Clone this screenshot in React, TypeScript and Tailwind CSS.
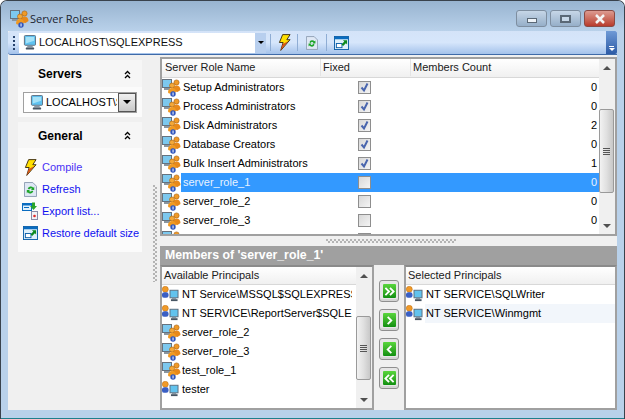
import React from "react";

const font = "font-['Liberation_Sans',Arial,sans-serif]";

function Monitor({ className = "" }: { className?: string }) {
  return (
    <svg viewBox="0 0 14 16" className={className}>
      <rect x="1.500" y="0.500" width="12" height="10.500" rx="1" fill="#5fc2f0" stroke="#5a6b7c" />
      <path d="M3 2h9v4L3 9z" fill="#a5e2f8" />
      <path d="M5 11.500h5l1 2H4z" fill="#8796a3" />
      <rect x="3" y="13.500" width="9" height="2" rx="0.500" fill="#475563" />
    </svg>
  );
}

function RoleIcon() {
  return (
    <svg viewBox="0 0 19 18" className="w-[19px] h-[18px] shrink-0">
      <rect x="0.500" y="0.500" width="9" height="8" fill="#7cc8ee" stroke="#66727e" />
      <rect x="2" y="9" width="6" height="2" fill="#8a96a0" />
      <circle cx="14.500" cy="3.500" r="2.600" fill="#f09a28" stroke="#a8620f" strokeWidth="0.600" />
      <path d="M10.500 12c0-3.500 1.500-5.500 4-5.500s4 2 4 4.500l-3 2z" fill="#e8891a" />
      <circle cx="10" cy="6.500" r="2.500" fill="#f4a838" stroke="#a8620f" strokeWidth="0.600" />
      <path d="M6 13.500c0-3 1.500-4.500 4-4.500s4 1.500 4 4l-2 1.500H7z" fill="#f09a22" />
      <circle cx="11" cy="15" r="2.700" fill="#2f55bd" />
      <rect x="10.500" y="13.500" width="1.100" height="3" fill="#e8eefc" />
    </svg>
  );
}

function UserIcon() {
  return (
    <svg viewBox="0 0 19 18" className="-ml-[1px] w-[18px] h-[17px] shrink-0">
      <circle cx="4.500" cy="3.500" r="3.200" fill="#f09a28" stroke="#b86a10" strokeWidth="0.500" />
      <rect x="1" y="6.500" width="7" height="6" rx="2.500" fill="#3a5fc4" />
      <rect x="9.500" y="4.500" width="8.500" height="8" fill="#62c3ee" stroke="#5a6b7c" />
      <rect x="11.500" y="12.500" width="4.500" height="1.500" fill="#8796a3" />
      <rect x="10.500" y="14" width="7" height="2" fill="#475563" />
    </svg>
  );
}

function Bolt({ className = "" }: { className?: string }) {
  return (
    <svg viewBox="0 0 14 18" className={className}>
      <path d="M5 0.500h8L9.500 6H13L3 17.500 5.500 9H1.500z" fill="#ffe000" stroke="#3a2a10" strokeWidth="1" />
      <path d="M11 7.500 4.500 15.500 3 17.500 5 11z" fill="#d9501e" />
    </svg>
  );
}

function RefreshDoc({ className = "" }: { className?: string }) {
  return (
    <svg viewBox="0 0 14 16" className={className}>
      <path d="M0.500 0.500h9l4 4v11H0.500z" fill="#dfe8f5" stroke="#8a9ab0" />
      <path d="M4 7a3.500 3.500 0 0 1 6-1l1-1v3.500H7.500l1.200-1.200A2 2 0 0 0 5.500 8z" fill="#1fa52a" />
      <path d="M10 10a3.500 3.500 0 0 1-6 1l-1 1V8.500h3.500L5.300 9.700A2 2 0 0 0 8.500 9z" fill="#1fa52a" />
    </svg>
  );
}

function RestoreIcon({ className = "" }: { className?: string }) {
  return (
    <svg viewBox="0 0 16 15" className={className}>
      <rect x="0.500" y="0.500" width="15" height="14" fill="#dff0fb" stroke="#0a5ea8" />
      <rect x="1" y="1" width="14" height="2.500" fill="#0a6cc0" />
      <rect x="2.500" y="8" width="6" height="4.500" fill="#fff" stroke="#0a5ea8" />
      <path d="M8 9l3-3-1.500-1.500H14V9l-1.300-1.300-3 3z" fill="#0d8a1e" />
    </svg>
  );
}

function ExportIcon() {
  return (
    <svg viewBox="0 0 16 18" className="w-[16px] h-[18px]">
      <rect x="0.500" y="1.500" width="9" height="7" fill="#dff0fb" stroke="#0a6cc0" />
      <rect x="1" y="2" width="8" height="1.500" fill="#0a6cc0" />
      <rect x="2" y="5" width="5" height="1" fill="#0a6cc0" />
      <path d="M10 0.500h3v3.500h2l-3.500 4-3.500-4h2z" fill="#2aa52a" />
      <rect x="9.500" y="9.500" width="6" height="8" fill="#f2f2f6" stroke="#8a8aa8" />
      <circle cx="12.500" cy="14" r="1.300" fill="#e02828" />
    </svg>
  );
}

function Collapse() {
  return (
    <svg viewBox="0 0 7 9" className="ml-auto mr-[11px] w-[7px] h-[9px]">
      <path d="M1 4l2.500-2.500L6 4M1 8l2.500-2.500L6 8" fill="none" stroke="#000" strokeWidth="1.300" />
    </svg>
  );
}

function ArrowBtn({ path }: { path: string }) {
  return (
    <button className="w-[20px] h-[22px] flex items-center justify-center rounded-[3px] border border-[#8f8f8f] bg-[#e6e6e6] shadow-[inset_0_-2px_0_#d4d4d4]">
      <span className="w-[13px] h-[14px] flex items-center justify-center rounded-[1px] bg-gradient-to-b from-[#58d63c] to-[#0e8f10]">
        <svg viewBox="0 0 12 12" className="w-[11px] h-[11px]">
          <path d={path} fill="none" stroke="#fff" strokeWidth="2" />
        </svg>
      </span>
    </button>
  );
}

function Scrollbar({ thumb, before }: { thumb: string; before: string }) {
  return (
    <div className="w-[16px] shrink-0 flex flex-col bg-[#f0f0f0]">
      <div className="h-[17px] shrink-0 flex items-center justify-center">
        <span className="w-0 h-0 border-x-[4px] border-x-transparent border-b-[4px] border-b-[#505050]" />
      </div>
      <div className={before} />
      <div className={`${thumb} w-[15px] flex flex-col items-center justify-center gap-[1px] rounded-[2px] border border-[#9a9a9a] bg-gradient-to-r from-[#f2f2f2] via-[#e0e0e0] to-[#c8c8c8]`}>
        <span className="w-[7px] h-px bg-[#555]" />
        <span className="w-[7px] h-px bg-[#555]" />
        <span className="w-[7px] h-px bg-[#555]" />
        <span className="w-[7px] h-px bg-[#555]" />
      </div>
      <div className="flex-1" />
      <div className="h-[17px] shrink-0 flex items-center justify-center">
        <span className="w-0 h-0 border-x-[4px] border-x-transparent border-t-[4px] border-t-[#505050]" />
      </div>
    </div>
  );
}

function Check({ checked }: { checked: boolean }) {
  return (
    <span className="w-[13px] h-[13px] flex items-center justify-center border border-[#8e8e8e] bg-gradient-to-br from-[#d8d8d8] to-[#f4f4f4]">
      {checked && (
        <svg viewBox="0 0 11 11" className="w-[11px] h-[11px]">
          <path d="M2.500 5.500 5 8.500 8.500 1.500" fill="none" stroke="#4a66ae" strokeWidth="2" />
        </svg>
      )}
    </span>
  );
}

const roles = [
  { name: "Setup Administrators", fixed: true, count: 0 },
  { name: "Process Administrators", fixed: true, count: 0 },
  { name: "Disk Administrators", fixed: true, count: 2 },
  { name: "Database Creators", fixed: true, count: 0 },
  { name: "Bulk Insert Administrators", fixed: true, count: 1 },
  { name: "server_role_1", fixed: false, count: 0, selected: true },
  { name: "server_role_2", fixed: false, count: 0 },
  { name: "server_role_3", fixed: false, count: 0 },
  { name: "", fixed: false, count: null },
];

const available = [
  { name: "NT Service\\MSSQL$SQLEXPRESS", user: true },
  { name: "NT SERVICE\\ReportServer$SQLEXPRESS", user: true },
  { name: "server_role_2", user: false },
  { name: "server_role_3", user: false },
  { name: "test_role_1", user: false },
  { name: "tester", user: true },
];

const links = [
  { label: "Compile", color: "text-[#4a32f5]", icon: <Bolt className="w-[13px] h-[17px]" /> },
  { label: "Refresh", color: "text-[#1010f0]", icon: <RefreshDoc className="w-[13px] h-[15px]" /> },
  { label: "Export list...", color: "text-[#1010f0]", icon: <ExportIcon /> },
  { label: "Restore default size", color: "text-[#1010f0]", icon: <RestoreIcon className="w-[15px] h-[14px]" /> },
];

export default function App() {
  return (
    <div className={`${font} w-[625px] h-[419px] flex flex-col overflow-hidden rounded-t-[7px] border-t border-x border-[#39424c] bg-[#b9d1ea] text-[11px] text-black`}>
      {/* title bar */}
      <div className="h-[30px] shrink-0 flex items-start pl-[9px] pr-[9px] bg-gradient-to-b from-[#98b4d0] to-[#b9d1ea]">
        <div className="mt-[9px] flex items-center gap-[1px]">
          <RoleIcon />
          <span className="font-['Open_Sans',sans-serif] text-[11px] text-[#1a2430]">Server Roles</span>
        </div>
        <div className="ml-auto flex gap-[3px]">
          <div className="w-[31px] h-[17px] mt-[9px] flex items-end justify-center pb-[3px] rounded-[3px] border border-[#7e8ea0] bg-gradient-to-b from-[#c6d6e7] to-[#96afc9]">
            <span className="w-[10px] h-[5px] border border-[#5a6876] bg-[#eef3f8]" />
          </div>
          <div className="w-[31px] h-[17px] mt-[9px] flex items-center justify-center rounded-[3px] border border-[#7e8ea0] bg-gradient-to-b from-[#c6d6e7] to-[#96afc9]">
            <span className="w-[11px] h-[8px] border-2 border-[#5a6876] bg-[#c8d8e8]" />
          </div>
          <div className="w-[31px] h-[17px] mt-[9px] flex items-center justify-center rounded-[3px] border border-[#8a4a44] bg-gradient-to-b from-[#dc9a90] to-[#b83a2c]">
            <svg viewBox="0 0 12 10" className="w-[12px] h-[10px]">
              <path d="M2 1l8 8M10 1l-8 8" stroke="#f4f4f4" strokeWidth="2.500" />
            </svg>
          </div>
        </div>
      </div>

      <div className="flex-1 min-h-0 mx-[7px] flex flex-col bg-[#f0f0f0]">
        {/* toolbar */}
        <div className="h-[24px] shrink-0 flex items-center rounded-l-[3px] border-b border-[#3e6aa8] bg-gradient-to-b from-[#d4e3f8] via-[#d6e6fb] to-[#a4c2ea]">
          <div className="ml-[5px] w-[2px] h-[14px] bg-[linear-gradient(#27436e_50%,transparent_50%)] bg-[length:2px_4px]" />
          <div className="ml-[4px] w-[247px] h-[20px] flex items-center bg-white">
            <Monitor className="ml-[4px] w-[13px] h-[15px]" />
            <span className="ml-[3px] text-[11px] text-[#101010]">LOCALHOST\SQLEXPRESS</span>
            <span className="ml-auto w-[11px] h-full flex items-center justify-center bg-[#b8cfee]">
              <span className="w-0 h-0 border-x-[3px] border-x-transparent border-t-[3px] border-t-black" />
            </span>
          </div>
          <span className="ml-[4px] w-px h-[17px] bg-[#8fadd4]" />
          <Bolt className="ml-[7px] w-[13px] h-[17px]" />
          <span className="ml-[6px] w-px h-[17px] bg-[#8fadd4]" />
          <RefreshDoc className="ml-[8px] w-[12px] h-[14px]" />
          <span className="ml-[8px] w-px h-[17px] bg-[#8fadd4]" />
          <RestoreIcon className="ml-[7px] w-[15px] h-[14px]" />
          <div className="ml-auto w-[11px] h-full flex flex-col items-center justify-end gap-[1px] pb-[3px] rounded-r-[2px] bg-gradient-to-b from-[#6f9ad6] to-[#2d5ba6]">
            <span className="w-[5px] h-px bg-white" />
            <span className="w-0 h-0 border-x-[3px] border-x-transparent border-t-[3px] border-t-white" />
          </div>
        </div>

        <div className="flex-1 min-h-0 flex">
          {/* side panel */}
          <div className="w-[142px] shrink-0 pl-[10px] pr-[8px] pt-[5px] flex flex-col">
            <div className="h-[27px] flex items-center pt-[1px] bg-[#f6f6f6]">
              <span className="ml-[20px] text-[12px] font-bold">Servers</span>
              <Collapse />
            </div>
            <div className="h-[30px] flex items-center bg-[#fbfbfb] pl-[5px]">
              <div className="w-[114px] h-[21px] flex items-center border border-[#a0a0a0] bg-white">
                <Monitor className="ml-[6px] w-[13px] h-[15px] shrink-0" />
                <span className="ml-[3px] w-[71px] overflow-hidden whitespace-nowrap">LOCALHOST\SQLEXPRESS</span>
                <span className="ml-auto w-[18px] h-full flex items-center justify-center border border-[#555] bg-gradient-to-b from-[#f0f0f0] to-[#c8c8c8]">
                  <span className="w-0 h-0 border-x-[4px] border-x-transparent border-t-[4px] border-t-black" />
                </span>
              </div>
            </div>
            <div className="mt-[5px] h-[26px] flex items-center pt-[1px] bg-[#f6f6f6]">
              <span className="ml-[20px] text-[12px] font-bold">General</span>
              <Collapse />
            </div>
            <div className="h-[104px] pt-[8px] bg-[#fbfbfb] flex flex-col">
              {links.map((l) => (
                <div key={l.label} className="h-[22px] flex items-center">
                  <span className="w-[24px] flex justify-center">{l.icon}</span>
                  <span className={l.color}>{l.label}</span>
                </div>
              ))}
            </div>
          </div>

          {/* vertical splitter */}
          <div className="w-[10px] shrink-0 flex justify-center pt-[130px]">
            <div className="w-[2px] h-[97px] bg-[linear-gradient(#b4b4b4_50%,transparent_50%)] bg-[length:2px_4px]" />
            <div className="mt-[2px] w-[2px] h-[95px] bg-[linear-gradient(#b4b4b4_50%,transparent_50%)] bg-[length:2px_4px]" />
          </div>

          {/* grid and members */}
          <div className="flex-1 min-w-0 flex flex-col">
            <div className="mt-[2px] h-[179px] shrink-0 flex border-2 border-[#a0a0a0] bg-white">
              <div className="flex-1 min-w-0 flex flex-col overflow-hidden">
                <div className="h-[19px] shrink-0 flex items-center pb-[1px] border-b border-[#d8d8d8] bg-gradient-to-b from-white to-[#f0f0f0] text-[#202020]">
                  <span className="w-[158px] pl-[3px]">Server Role Name</span>
                  <span className="w-[90px] pl-[2px] border-l border-[#e4e4e4]">Fixed</span>
                  <span className="flex-1 pl-[2px] border-l border-[#e4e4e4]">Members Count</span>
                </div>
                {roles.map((r, i) => (
                  <div key={i} className="h-[19px] shrink-0 flex items-center">
                    <RoleIcon />
                    <div className={`flex-1 h-full flex items-center ${r.selected ? "bg-[#3399ff] text-[#e8f2ff]" : ""}`}>
                      <span className="w-[177px] pl-[2px]">{r.name}</span>
                      <span className="w-[13px] flex justify-center"><Check checked={r.fixed} /></span>
                      <span className="flex-1 pr-[2px] text-right">{r.count}</span>
                    </div>
                  </div>
                ))}
              </div>
              <Scrollbar before="h-[33px]" thumb="h-[84px]" />
            </div>

            {/* horizontal splitter */}
            <div className="h-[10px] shrink-0 flex flex-col items-center justify-center">
              <div className="ml-[4px] w-[130px] h-[2px] bg-[linear-gradient(90deg,#b4b4b4_50%,transparent_50%)] bg-[length:4px_2px]" />
              <div className="ml-[6px] w-[128px] h-[2px] bg-[linear-gradient(90deg,#b4b4b4_50%,transparent_50%)] bg-[length:4px_2px]" />
            </div>

            <div className="h-[19px] shrink-0 flex items-center pl-[5px] pb-[1px] bg-[#a0a0a0] text-[12.300px] font-bold text-white">Members of 'server_role_1'</div>

            <div className="flex-1 min-h-0 flex">
              <div className="w-[214px] shrink-0 flex border-2 border-[#a0a0a0] border-t-[#8a8a8a] bg-white">
                <div className="flex-1 min-w-0 flex flex-col overflow-hidden">
                  <div className="h-[18px] shrink-0 flex items-center pl-[2px] border-b border-[#d8d8d8] bg-gradient-to-b from-white to-[#f0f0f0] text-[#202020]">Available Principals</div>
                  {available.map((p) => (
                    <div key={p.name} className="h-[19px] shrink-0 flex items-center">
                      <span className="w-[20px] shrink-0 flex">{p.user ? <UserIcon /> : <RoleIcon />}</span>
                      <span className="w-[170px] overflow-hidden whitespace-nowrap">{p.name}</span>
                    </div>
                  ))}
                </div>
                <Scrollbar before="h-[32px]" thumb="h-[64px]" />
              </div>
              <div className="w-[30px] shrink-0 flex flex-col items-center gap-[7px] pt-[15px]">
                <ArrowBtn path="M1.500 2l4 4-4 4M6.500 2l4 4-4 4" />
                <ArrowBtn path="M4 2l4 4-4 4" />
                <ArrowBtn path="M8 2L4 6l4 4" />
                <ArrowBtn path="M5.500 2l-4 4 4 4M10.500 2l-4 4 4 4" />
              </div>
              <div className="flex-1 min-w-0 flex flex-col border-2 border-[#a0a0a0] border-t-[#8a8a8a] bg-white overflow-hidden">
                <div className="h-[18px] shrink-0 flex items-center pl-[2px] border-b border-[#d8d8d8] bg-gradient-to-b from-white to-[#f0f0f0] text-[#202020]">Selected Principals</div>
                <div className="h-[19px] shrink-0 flex items-center">
                  <span className="w-[20px] shrink-0 flex"><UserIcon /></span>
                  <span>NT SERVICE\SQLWriter</span>
                </div>
                <div className="h-[19px] shrink-0 flex items-center">
                  <span className="w-[19px] shrink-0 flex"><UserIcon /></span>
                  <span className="flex-1 h-full flex items-center pl-[1px] bg-[#f2f6fb]">NT SERVICE\Winmgmt</span>
                </div>
              </div>
            </div>
          </div>
        </div>
      </div>
      <div className="h-[9px] shrink-0 border-b border-[#1f7f8c] bg-[#b9d1ea]" />
    </div>
  );
}
